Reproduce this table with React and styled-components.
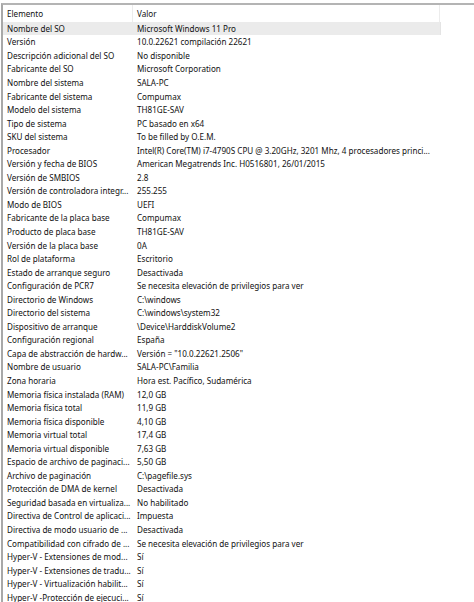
import React from 'react'
import styled, { createGlobalStyle } from 'styled-components'

const rows = [
  ['Nombre del SO', 'Microsoft Windows 11 Pro'],
  ['Versión', '10.0.22621 compilación 22621'],
  ['Descripción adicional del SO', 'No disponible'],
  ['Fabricante del SO', 'Microsoft Corporation'],
  ['Nombre del sistema', 'SALA-PC'],
  ['Fabricante del sistema', 'Compumax'],
  ['Modelo del sistema', 'TH81GE-SAV'],
  ['Tipo de sistema', 'PC basado en x64'],
  ['SKU del sistema', 'To be filled by O.E.M.'],
  ['Procesador', 'Intel(R) Core(TM) i7-4790S CPU @ 3.20GHz, 3201 Mhz, 4 procesadores princi...'],
  ['Versión y fecha de BIOS', 'American Megatrends Inc. H0516801, 26/01/2015'],
  ['Versión de SMBIOS', '2.8'],
  ['Versión de controladora integr...', '255.255'],
  ['Modo de BIOS', 'UEFI'],
  ['Fabricante de la placa base', 'Compumax'],
  ['Producto de placa base', 'TH81GE-SAV'],
  ['Versión de la placa base', '0A'],
  ['Rol de plataforma', 'Escritorio'],
  ['Estado de arranque seguro', 'Desactivada'],
  ['Configuración de PCR7', 'Se necesita elevación de privilegios para ver'],
  ['Directorio de Windows', 'C:\\windows'],
  ['Directorio del sistema', 'C:\\windows\\system32'],
  ['Dispositivo de arranque', '\\Device\\HarddiskVolume2'],
  ['Configuración regional', 'España'],
  ['Capa de abstracción de hardw...', 'Versión = "10.0.22621.2506"'],
  ['Nombre de usuario', 'SALA-PC\\Familia'],
  ['Zona horaria', 'Hora est. Pacífico, Sudamérica'],
  ['Memoria física instalada (RAM)', '12,0 GB'],
  ['Memoria física total', '11,9 GB'],
  ['Memoria física disponible', '4,10 GB'],
  ['Memoria virtual total', '17,4 GB'],
  ['Memoria virtual disponible', '7,63 GB'],
  ['Espacio de archivo de paginaci...', '5,50 GB'],
  ['Archivo de paginación', 'C:\\pagefile.sys'],
  ['Protección de DMA de kernel', 'Desactivada'],
  ['Seguridad basada en virtualiza...', 'No habilitado'],
  ['Directiva de Control de aplicaci...', 'Impuesta'],
  ['Directiva de modo usuario de ...', 'Desactivada'],
  ['Compatibilidad con cifrado de ...', 'Se necesita elevación de privilegios para ver'],
  ['Hyper-V - Extensiones de mod...', 'Sí'],
  ['Hyper-V - Extensiones de tradu...', 'Sí'],
  ['Hyper-V - Virtualización habilit...', 'Sí'],
  ['Hyper-V -Protección de ejecuci...', 'Sí'],
]

const GlobalStyle = createGlobalStyle`
  html, body {
    margin: 0;
    padding: 0;
    background: #ffffff;
    overflow: hidden;
  }
  body {
    font-family: 'Noto Sans', 'Open Sans', sans-serif;
    font-size: 8.1px;
    color: #111111;
  }
`

const Frame = styled.div`
  margin-top: 3px;
  margin-left: 1px;
  height: 600px;
  border-top: 2px solid #b4b4b4;
  border-left: 2px solid #a8a8a8;
  overflow: hidden;
`

const Header = styled.div`
  display: grid;
  grid-template-columns: 130px 307px;
  height: 16.5px;
`

const HeadCell = styled.div`
  display: flex;
  align-items: center;
  padding-left: 4px;
  border-right: 1px solid #ececec;
  white-space: nowrap;
`

const Row = styled.div`
  display: grid;
  grid-template-columns: 130px 307px;
  height: 13.55px;
  background: ${(p) => (p.$selected ? '#ebebeb' : 'transparent')};
  border-right: ${(p) => (p.$selected ? '1px solid #e4e4e4' : '1px solid transparent')};
  width: 437px;
`

const Cell = styled.div`
  display: flex;
  align-items: center;
  padding-left: 4px;
  white-space: nowrap;
  overflow: hidden;
`

export default function App() {
  return (
    <>
      <GlobalStyle />
      <Frame>
        <Header>
          <HeadCell>Elemento</HeadCell>
          <HeadCell>Valor</HeadCell>
        </Header>
        {rows.map(([k, v], i) => (
          <Row key={k} $selected={i === 0}>
            <Cell>{k}</Cell>
            <Cell>{v}</Cell>
          </Row>
        ))}
      </Frame>
    </>
  )
}
